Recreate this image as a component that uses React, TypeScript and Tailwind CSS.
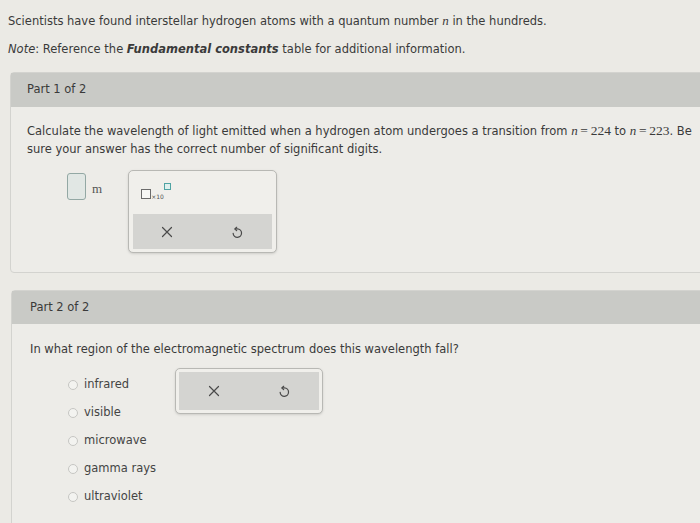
import React from 'react';

function ClearIcon() {
  return (
    <svg width="12" height="12" viewBox="0 0 12 12" fill="none" stroke="#4a4a4a" strokeWidth="1.2" strokeLinecap="round">
      <path d="M1.5 1.5 L10.5 10.5 M10.5 1.5 L1.5 10.5" />
    </svg>
  );
}

function UndoIcon() {
  return (
    <svg width="14" height="14" viewBox="0 0 16 16" fill="none" stroke="#4a4a4a" strokeWidth="1.4" strokeLinecap="round" strokeLinejoin="round">
      <path d="M6 4.5 H8.5 A4.8 4.8 0 1 1 3.6 9.6" />
      <path d="M7.6 2.6 L5.6 4.5 L7.6 6.4" />
    </svg>
  );
}

function Sci() {
  return (
    <div className="flex items-end">
      <span className="w-[10px] h-[10px] border border-[#6b6b6b] bg-[#f7f7f5]" />
      <span className="text-[6px] leading-none text-[#555] mb-[-1px]">×10</span>
      <span className="w-[7px] h-[7px] border border-[#4fa3a3] bg-[#dff0ee] mb-[9px]" />
    </div>
  );
}

function N() {
  return <i className="font-['Liberation_Serif',serif] text-[13px]">n</i>;
}

function Num({ v }: { v: string }) {
  return <span className="font-['Liberation_Serif',serif] text-[13.5px]">{'\u2009=\u2009' + v}</span>;
}

function Option({ label }: { label: string }) {
  return (
    <div className="flex items-center h-[18px] gap-[6px]">
      <span className="w-[10px] h-[10px] rounded-full border border-[#c6c6c3] bg-[#f3f3f0]" />
      <span className="text-[#444]">{label}</span>
    </div>
  );
}

export default function App() {
  return (
    <div className="w-[700px] h-[523px] overflow-hidden bg-[#ebeae5] font-['DejaVu_Sans',sans-serif] text-[11.5px] text-[#3a3a3a]">
      <p className="pl-2 pt-[14px] leading-[14px]">
        Scientists have found interstellar hydrogen atoms with a quantum number <N /> in the hundreds.
      </p>
      <p className="pl-2 mt-[14px] leading-[14px]">
        <i>Note</i>: Reference the <b><i>Fundamental constants</i></b> table for additional information.
      </p>

      <section className="mt-[16px] ml-[10px] -mr-[10px] border border-[#d3d3cf] rounded-sm bg-[#edece8]">
        <div className="h-[34px] bg-[#c9cac6] px-4 flex items-center">Part 1 of 2</div>
        <div className="px-4 pt-[15px] pb-[19px]">
          <p className="leading-[18px]">
            Calculate the wavelength of light emitted when a hydrogen atom undergoes a transition from <N />
            <Num v="224" /> to <N />
            <Num v="223" />. Be
            <br />
            sure your answer has the correct number of significant digits.
          </p>
          <div className="flex items-start mt-3">
            <span className="ml-10 mt-[3px] w-[19px] h-[27px] rounded-[3px] border border-[#93a8a4] bg-[#e1e7e4]" />
            <span className="ml-[6px] mt-[9px] font-['Liberation_Serif',serif] text-[13px] text-[#555]">m</span>
            <div className="ml-[26px] w-[149px] h-[83px] rounded-[5px] border border-[#b8b8b4] bg-[#f0efeb] shadow-sm flex flex-col">
              <div className="flex-1 pl-3 pt-[12px]">
                <Sci />
              </div>
              <div className="mx-[4px] mb-[3px] h-[35px] bg-[#d4d4d1] flex items-center justify-around">
                <ClearIcon />
                <UndoIcon />
              </div>
            </div>
          </div>
        </div>
      </section>

      <section className="mt-[17px] ml-[11px] -mr-[10px] h-[240px] border border-[#d3d3cf] rounded-sm bg-[#edece8]">
        <div className="h-[33px] bg-[#c9cac6] px-[18px] flex items-center">Part 2 of 2</div>
        <div className="px-[18px] pt-[16px]">
          <p className="leading-[18px]">In what region of the electromagnetic spectrum does this wavelength fall?</p>
          <div className="flex items-start mt-[18px]">
            <div className="w-[145px] pl-[38px] flex flex-col gap-[10px]">
              <Option label="infrared" />
              <Option label="visible" />
              <Option label="microwave" />
              <Option label="gamma rays" />
              <Option label="ultraviolet" />
            </div>
            <div className="-mt-2 w-[148px] h-[46px] rounded-[5px] border border-[#b8b8b4] bg-[#f0efeb] shadow-sm p-[3px]">
              <div className="h-full bg-[#d4d4d1] flex items-center justify-around">
                <ClearIcon />
                <UndoIcon />
              </div>
            </div>
          </div>
        </div>
      </section>
    </div>
  );
}
